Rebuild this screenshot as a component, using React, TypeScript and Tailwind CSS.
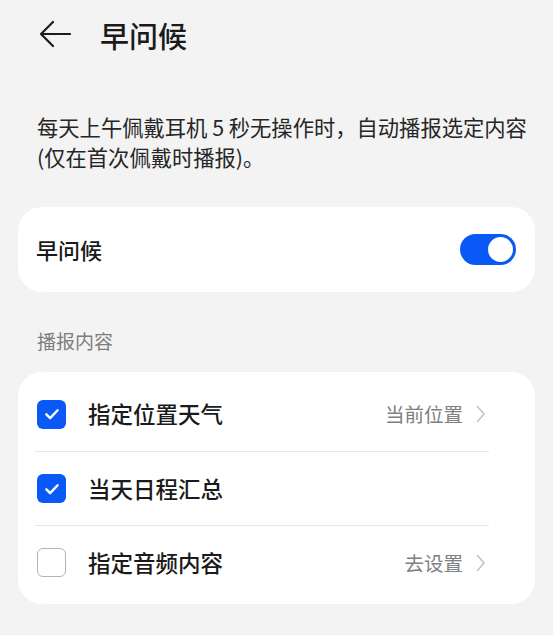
const font = { fontFamily: '"Noto Sans CJK SC", "Noto Sans", sans-serif' }

function Check({ checked }: { checked: boolean }) {
  if (!checked) {
    return <div className="w-[29px] h-[29px] rounded-[6px] border-[1.5px] border-[#b5b5b5] bg-white shrink-0" />
  }
  return (
    <div className="w-[29px] h-[29px] rounded-[6px] bg-[#0a59f7] flex items-center justify-center shrink-0">
      <svg width="18" height="18" viewBox="0 0 24 24" fill="none">
        <path d="M4.5 12.5l5 5 10-10.5" stroke="white" strokeWidth="3.2" strokeLinecap="round" strokeLinejoin="round" />
      </svg>
    </div>
  )
}

function Chevron() {
  return (
    <svg width="10" height="18" viewBox="0 0 10 18" fill="none" className="ml-[13px]">
      <path d="M1.5 1.5L8 9l-6.5 7.5" stroke="#c4c4c4" strokeWidth="1.6" strokeLinecap="round" strokeLinejoin="round" />
    </svg>
  )
}

export default function App() {
  const items = [
    { label: "指定位置天气", checked: true, value: "当前位置" },
    { label: "当天日程汇总", checked: true, value: "" },
    { label: "指定音频内容", checked: false, value: "去设置" },
  ]

  return (
    <div className="w-[553px] h-[635px] bg-[#f3f3f3] overflow-hidden" style={font}>
      {/* Header */}
      <div className="h-[70px] flex items-center pl-[39px]">
        <svg width="32" height="28" viewBox="0 0 32 28" fill="none" className="mt-[-2px]">
          <path d="M31 14H2M14 2L2 14l12 12" stroke="#1c1c1c" strokeWidth="2.2" strokeLinecap="round" strokeLinejoin="round" />
        </svg>
        <h1 className="ml-[29px] text-[29px] font-medium text-[#1a1a1a] leading-none">早问候</h1>
      </div>

      {/* Description */}
      <p className="mt-[42px] pl-[37px] text-[21.3px] leading-[30px] text-[#262626] whitespace-nowrap">
        每天上午佩戴耳机 5 秒无操作时，自动播报选定内容
        <br />
        (仅在首次佩戴时播报)。
      </p>

      {/* Toggle card */}
      <div className="mx-[18px] mt-[35px] h-[85px] bg-white rounded-[24px] flex items-center justify-between pl-[18px] pr-[19px]">
        <span className="text-[22px] font-medium text-[#1a1a1a]">早问候</span>
        <div className="w-[56px] h-[31px] rounded-full bg-[#0a59f7] flex items-center justify-end pr-[3px]">
          <div className="w-[25px] h-[25px] rounded-full bg-white" />
        </div>
      </div>

      {/* Section label */}
      <div className="px-[37px] mt-[36px] text-[19px] text-[#7d7d7d] leading-[26px]">播报内容</div>

      {/* List card */}
      <div className="mx-[18px] mt-[18px] bg-white rounded-[24px] py-[5px]">
        {items.map((item, i) => (
          <div key={item.label}>
            {i > 0 && <div className="ml-[17px] mr-[46px] h-px bg-[#e6e6e6]" />}
            <div className={`${i > 0 ? "h-[73px]" : "h-[74px]"} flex items-center pl-[19px] pr-[49px]`}>
              <Check checked={item.checked} />
              <span className="ml-[22px] text-[22.5px] font-medium text-[#1a1a1a] flex-1">{item.label}</span>
              {item.value && (
                <div className="flex items-center">
                  <span className="text-[19.5px] text-[#808080]">{item.value}</span>
                  <Chevron />
                </div>
              )}
            </div>
          </div>
        ))}
      </div>
    </div>
  )
}
